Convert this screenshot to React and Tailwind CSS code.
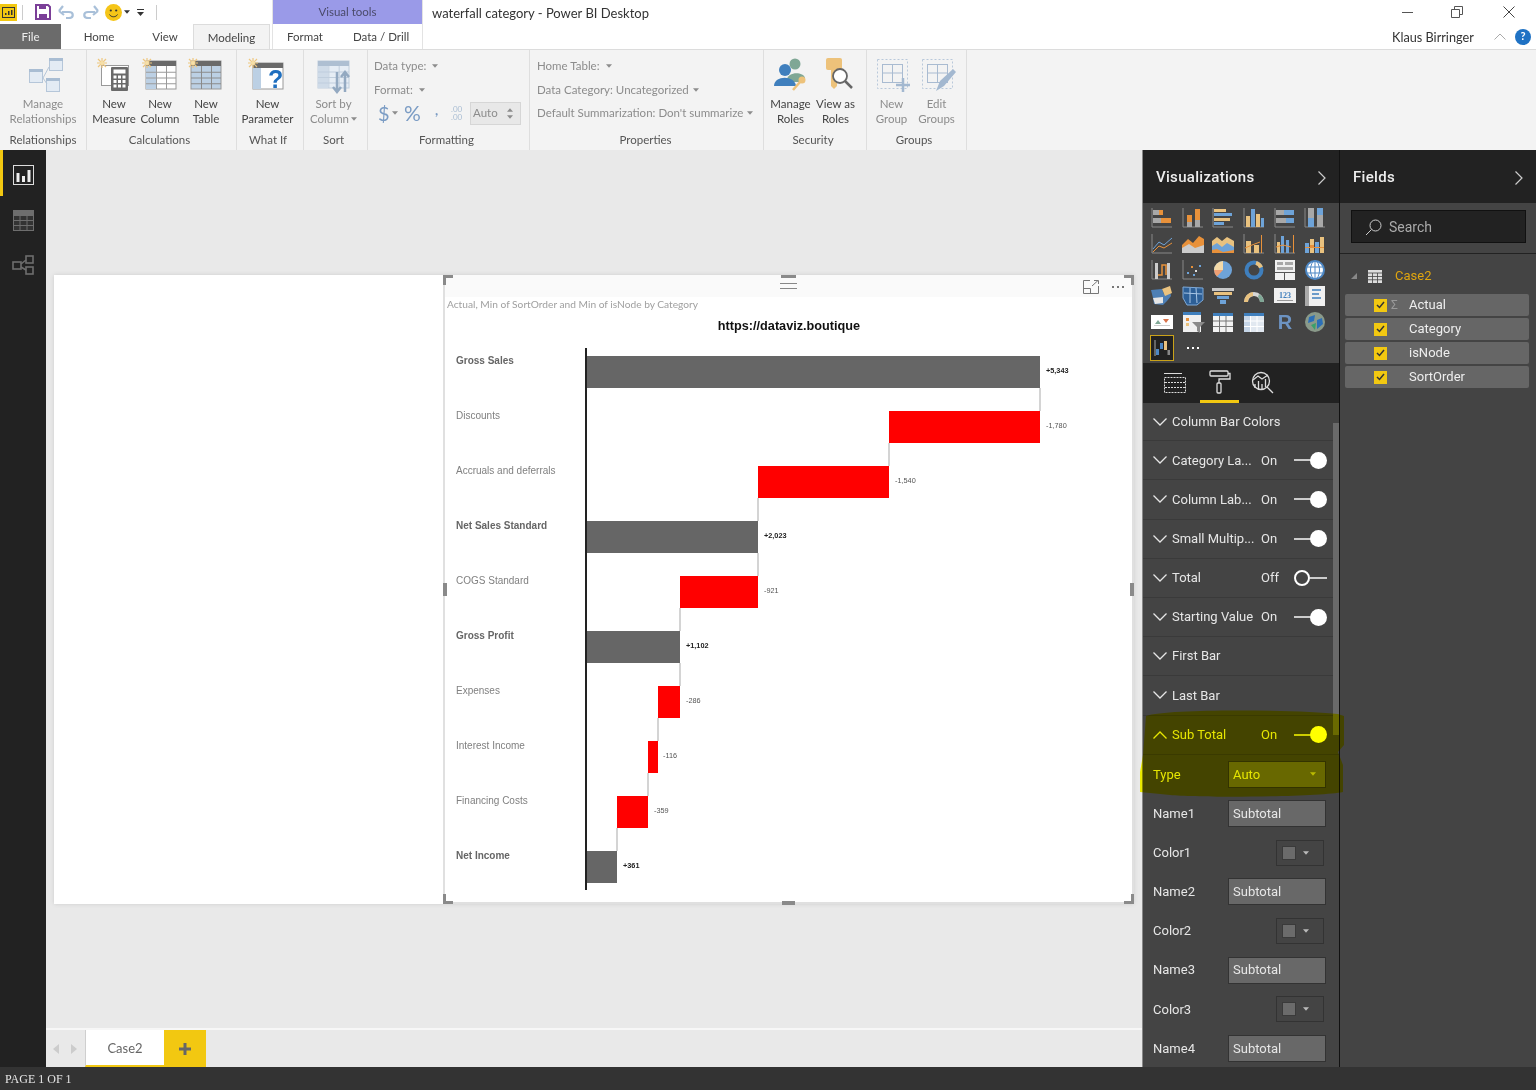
import React from "react";

const OR = "#e8913a";
const TAN = "#e9c27f";
const BL = "#6ea3d8";
const GR = "#a8a8a8";

// sparkle used on the "new ..." ribbon buttons
const Spark = ({ x, y }) => (
    <g stroke="#eec77f" strokeWidth="1.2">
        <path d={`M${x - 5} ${y}H${x + 5}M${x} ${y - 5}V${y + 5}M${x - 4} ${y - 4}L${x + 4} ${y + 4}M${x - 4} ${y + 4}L${x + 4} ${y - 4}`} />
        <circle cx={x} cy={y} r="2" fill="#f6dfa8" stroke="none" />
    </g>
);

const Ico = ({ children }) => (
    <svg width="40" height="40" viewBox="0 0 40 40" className="shrink-0">{children}</svg>
);

const tableLines = (x, y, w, h, cols, rows, color) => {
    const out = [];
    for (let i = 1; i < cols; i++) out.push(<rect key={`c${i}`} x={x + (w * i) / cols} y={y} width="1" height={h} fill={color} />);
    for (let i = 1; i < rows; i++) out.push(<rect key={`r${i}`} x={x} y={y + (h * i) / rows} width={w} height="1" fill={color} />);
    return out;
};

const ManageRelIcon = () => (
    <Ico>
        <g fill="#e3ebf4" stroke="#b5c6d9">
            <rect x="6.5" y="15.5" width="13" height="13" />
            <rect x="26.5" y="4.5" width="13" height="12" />
            <rect x="23.5" y="24.5" width="13" height="13" />
        </g>
        <rect x="6" y="15" width="14" height="3" fill="#a9bdd3" />
        <rect x="26" y="4" width="14" height="3" fill="#a9bdd3" />
        <rect x="23" y="24" width="14" height="3" fill="#a9bdd3" />
        <path d="M20 24L26 13M20 24L24 30" stroke="#b5c6d9" fill="none" />
    </Ico>
);

const MeasureIcon = () => (
    <Ico>
        <rect x="7.5" y="11.5" width="27" height="20" fill="#fff" stroke="#999" />
        <rect x="17" y="13" width="17" height="24" rx="1" fill="#6a6a6a" />
        <rect x="19.5" y="15.5" width="12" height="4" fill="#fff" />
        {[21.5, 26, 30.5].map((y) => [19.5, 24, 28.5].map((x) => <rect key={`${x}-${y}`} x={x} y={y} width="3" height="3" fill="#fff" />))}
        <Spark x={8} y={9} />
    </Ico>
);

const ColumnIcon = () => (
    <Ico>
        <rect x="6" y="7" width="30" height="28" fill="#fff" stroke="#999" />
        <rect x="6" y="7" width="30" height="5" fill="#6a6a6a" />
        <rect x="6" y="12" width="10" height="23" fill="#bcd0e4" />
        {tableLines(6, 12, 30, 23, 3, 4, "#9a9a9a")}
        <Spark x={7} y={9} />
    </Ico>
);

const TableIcon = () => (
    <Ico>
        <rect x="5" y="7" width="30" height="28" fill="#bcd0e4" stroke="#999" />
        <rect x="5" y="7" width="30" height="5" fill="#6a6a6a" />
        {tableLines(5, 12, 30, 23, 3, 4, "#8b8b8b")}
        <Spark x={7} y={9} />
    </Ico>
);

const ParamIcon = () => (
    <Ico>
        <rect x="5" y="9" width="30" height="26" fill="#fff" stroke="#999" />
        <rect x="5" y="9" width="30" height="5" fill="#6a6a6a" />
        <rect x="5" y="14" width="8" height="21" fill="#bcd0e4" />
        <Spark x={5} y={9} />
        <text x="20" y="34" fontSize="25" fontWeight="700" fill="#1f6fbf" fontFamily="Liberation Sans, sans-serif">?</text>
    </Ico>
);

const SortIcon = () => (
    <Ico>
        <rect x="4" y="7" width="31" height="27" fill="#e6edf5" stroke="#c0cedd" />
        <rect x="4" y="7" width="31" height="5" fill="#aebfd2" />
        <rect x="4" y="12" width="10" height="22" fill="#cfdbe8" />
        {tableLines(4, 12, 31, 22, 3, 4, "#c0cedd")}
        <path d="M23 18V37M19 33L23 38L27 33" stroke="#93a9c1" strokeWidth="2.5" fill="none" />
        <path d="M31 38V19M27 23L31 18L35 23" stroke="#93a9c1" strokeWidth="2.5" fill="none" />
    </Ico>
);

const RolesIcon = () => (
    <Ico>
        <circle cx="24" cy="10" r="5.5" fill="#7fa795" />
        <path d="M16 26C16 18 32 17 34 24V28H16Z" fill="#7fa795" />
        <circle cx="14" cy="16" r="6" fill="#3f7fbd" />
        <path d="M3 32C3 21 24 21 25 32Z" fill="#3f7fbd" />
        <circle cx="31" cy="26" r="3.5" fill="#edc27a" />
        <path d="M29 28L22 36" stroke="#edc27a" strokeWidth="2.5" />
    </Ico>
);

const ViewRolesIcon = () => (
    <Ico>
        <rect x="10" y="4" width="16" height="12" rx="2" fill="#edc27a" />
        <path d="M15 16H21V32L18 35L15 32Z" fill="#edc27a" />
        <circle cx="24" cy="22" r="7" fill="#fff" stroke="#666" strokeWidth="1.8" />
        <path d="M29 27L36 34" stroke="#666" strokeWidth="2.5" />
    </Ico>
);

const GroupIcon = ({ edit }) => (
    <Ico>
        <rect x="5.5" y="5.5" width="30" height="29" fill="none" stroke="#b9c8da" strokeDasharray="2 2" />
        <rect x="10.5" y="10.5" width="20" height="18" fill="none" stroke="#a9bbd1" />
        <path d="M20.5 10V28M10 19H30" stroke="#a9bbd1" />
        {edit ? (
            <path d="M19 37L23 27L36 15L39 18L27 32Z" fill="#a3b8d0" />
        ) : (
            <path d="M31 24V38M24 31H38" stroke="#a3b8d0" strokeWidth="2.5" />
        )}
    </Ico>
);

const Caret = ({ className = "" }) => (
    <svg width="6" height="4" viewBox="0 0 7 4" className={`shrink-0 ${className}`}><path d="M0 0H7L3.5 4Z" fill="currentColor" /></svg>
);

const BigBtn = ({ icon, lines, w, disabled, caret }) => (
    <div className={`flex flex-col items-center ${w} ${disabled ? "text-[#8c8c8c]" : "text-[#444]"}`}>
        {icon}
        <div className="mt-[2px] flex flex-col items-center leading-[15px] whitespace-nowrap">
            <span>{lines[0]}</span>
            <span className="flex items-center gap-[2px]">{lines[1]}{caret && <Caret />}</span>
        </div>
    </div>
);

const Group = ({ label, w, children, className = "", labelClass = "pr-[4px]" }) => (
    <div className={`flex h-[100px] shrink-0 flex-col border-r border-[#dedede] ${w}`}>
        <div className={`flex h-[81px] pt-[4px] ${className}`}>{children}</div>
        <div className={`flex h-[18px] items-center justify-center text-[#555] whitespace-nowrap ${labelClass}`}>{label}</div>
    </div>
);

const Ribbon = () => (
    <div className="flex h-[101px] shrink-0 border-t border-[#dcdcdc] bg-[#f3f3f3] text-[11.5px]">
        <Group label="Relationships" w="w-[87px]" className="justify-center" labelClass="">
            <BigBtn icon={<ManageRelIcon />} lines={["Manage", "Relationships"]} disabled w="w-[80px]" />
        </Group>
        <Group label="Calculations" w="w-[150px]" className="pl-[4px]">
            <BigBtn icon={<MeasureIcon />} lines={["New", "Measure"]} w="w-[46px]" />
            <BigBtn icon={<ColumnIcon />} lines={["New", "Column"]} w="w-[46px]" />
            <BigBtn icon={<TableIcon />} lines={["New", "Table"]} w="w-[46px]" />
        </Group>
        <Group label="What If" w="w-[67px]" className="justify-center pr-[5px]">
            <BigBtn icon={<ParamIcon />} lines={["New", "Parameter"]} w="w-[60px]" />
        </Group>
        <Group label="Sort" w="w-[64px]" className="justify-center pr-[4px]">
            <BigBtn icon={<SortIcon />} lines={["Sort by", "Column"]} disabled caret w="w-[56px]" />
        </Group>
        <Group label="Formatting" w="w-[162px]" className="flex-col pl-[6px] text-[#8c8c8c]">
            <div className="flex h-[24px] items-center gap-[6px]">Data type: <Caret /></div>
            <div className="flex h-[23px] items-center gap-[6px]">Format: <Caret /></div>
            <div className="flex items-center">
                <span className="w-[14px] pl-[4px] text-[20px] leading-[22px] text-[#7b9cc4]">$</span>
                <Caret className="ml-[4px]" />
                <span className="ml-[6px] w-[31px] text-[21px] leading-[22px] text-[#7b9cc4]">%</span>
                <span className="w-[16px] pb-[6px] text-[14px] font-bold leading-[18px] text-[#7b9cc4]">,</span>
                <span className="w-[19px] text-[8px] leading-[8px] text-[#a9bdd3]">.00<br />.00</span>
                <div className="flex h-[23px] w-[51px] items-center justify-between border border-[#d6d6d6] bg-[#e8e8e8] px-[2px]">
                    Auto
                    <span className="flex flex-col gap-[3px] pr-[5px]"><Caret className="rotate-180" /><Caret /></span>
                </div>
            </div>
        </Group>
        <Group label="Properties" w="w-[234px]" labelClass="pr-[2px]" className="flex-col pl-[7px] text-[#8c8c8c] whitespace-nowrap">
            <div className="flex h-[24px] items-center gap-[6px]">Home Table: <Caret /></div>
            <div className="flex h-[23px] items-center gap-[4px]">Data Category: Uncategorized <Caret /></div>
            <div className="flex h-[23px] items-center gap-[4px]">Default Summarization: Don't summarize <Caret /></div>
        </Group>
        <Group label="Security" w="w-[103px]" className="pl-[4px]">
            <BigBtn icon={<RolesIcon />} lines={["Manage", "Roles"]} w="w-[45px]" />
            <BigBtn icon={<ViewRolesIcon />} lines={["View as", "Roles"]} w="w-[45px]" />
        </Group>
        <Group label="Groups" w="w-[100px]" className="pl-[2px]" labelClass="pr-[5px]">
            <BigBtn icon={<GroupIcon />} lines={["New", "Group"]} disabled w="w-[45px]" />
            <BigBtn icon={<GroupIcon edit />} lines={["Edit", "Groups"]} disabled w="w-[45px]" />
        </Group>
    </div>
);

const Header = () => (
    <div className="flex h-[49px] shrink-0 bg-white text-[11.5px] text-[#444]">
        <div className="flex w-[272px] shrink-0 flex-col">
            <div className="flex h-[24px] items-center">
                <div className="flex h-[17px] w-[17px] items-center justify-center bg-[#f2c811]">
                    <svg width="13" height="11" viewBox="0 0 13 11"><rect x=".5" y=".5" width="12" height="10" fill="none" stroke="#333" /><path d="M3 8V6H4.5V8ZM6 8V4H7.5V8ZM9 8V3H10.5V8Z" fill="#333" /></svg>
                </div>
                <div className="ml-[5px] h-[15px] w-px bg-[#ccc]" />
                <svg className="ml-[12px]" width="16" height="16" viewBox="0 0 16 16"><path d="M1 1H13L15 3V15H1Z" fill="none" stroke="#7b3f98" strokeWidth="2" /><rect x="4" y="10" width="8" height="5" fill="#7b3f98" /><rect x="4" y="1" width="7" height="4" fill="#7b3f98" /></svg>
                <svg className="ml-[7px]" width="17" height="14" viewBox="0 0 17 14"><path d="M4 7H11C16 7 16 13 11 13H8M1 6L5 1M1 6L6 10" fill="none" stroke="#a9c0d9" strokeWidth="2.2" /></svg>
                <svg className="ml-[7px]" width="17" height="14" viewBox="0 0 17 14"><path d="M13 7H6C1 7 1 13 6 13H9M16 6L12 1M16 6L11 10" fill="none" stroke="#a9c0d9" strokeWidth="2.2" /></svg>
                <svg className="ml-[6px]" width="17" height="17" viewBox="0 0 17 17"><circle cx="8.5" cy="8.5" r="8.5" fill="#f5c518" /><circle cx="5.8" cy="6.5" r="1.1" fill="#333" /><circle cx="11.2" cy="6.5" r="1.1" fill="#333" /><path d="M4.5 10.5C6 13.5 11 13.5 12.5 10.5" stroke="#333" fill="none" /></svg>
                <Caret className="ml-[2px] text-[#333]" />
                <svg className="ml-[7px]" width="7" height="7" viewBox="0 0 7 7"><path d="M0 0H7V1H0ZM0 3H7L3.5 7Z" fill="#333" /></svg>
                <div className="ml-[12px] h-[15px] w-px bg-[#ccc]" />
            </div>
            <div className="flex h-[25px] items-stretch">
                <div className="flex w-[61px] items-center justify-center bg-[#6b6b6b] text-[#eee]">File</div>
                <div className="flex w-[76px] items-center justify-center">Home</div>
                <div className="flex w-[56px] items-center justify-center">View</div>
                <div className="-mb-px flex w-[77px] items-center justify-center border-x border-t border-[#dcdcdc] bg-[#f3f3f3]">Modeling</div>
            </div>
        </div>
        <div className="flex w-[151px] shrink-0 flex-col border-x border-[#e3e3e3]">
            <div className="flex h-[24px] items-center justify-center bg-[#9a9ae8] text-[#4a4a6a]">Visual tools</div>
            <div className="flex h-[25px] items-center pl-[14px]">
                <span className="w-[66px]">Format</span>
                <span>Data / Drill</span>
            </div>
        </div>
        <div className="min-w-0 flex-1 pl-[9px] pt-[3px] text-[13px] leading-[20px] text-[#333]">waterfall category - Power BI Desktop</div>
        <div className="flex w-[144px] shrink-0 flex-col">
            <div className="flex h-[24px] items-center">
                <div className="ml-[10px] h-px w-[11px] bg-[#555]" />
                <svg className="ml-[38px]" width="12" height="12" viewBox="0 0 12 12"><path d="M.5 3.5H8.5V11.5H.5ZM3.5 3V.5H11.5V8.5H9" fill="none" stroke="#555" /></svg>
                <svg className="ml-[40px]" width="12" height="12" viewBox="0 0 12 12"><path d="M.5 .5L11.5 11.5M11.5 .5L.5 11.5" stroke="#444" /></svg>
            </div>
            <div className="flex h-[25px] items-center">
                <span className="w-[81px] whitespace-nowrap pt-[2px] text-[12.7px] text-[#333]">Klaus Birringer</span>
                <svg className="ml-[21px]" width="12" height="7" viewBox="0 0 12 7"><path d="M.5 6.500L6 1L11.500 6.500" fill="none" stroke="#aaa" /></svg>
                <div className="ml-[9px] flex h-[16px] w-[16px] items-center justify-center rounded-full bg-[#1f72c4] text-[11px] font-bold text-white">?</div>
            </div>
        </div>
    </div>
);

const Rail = () => (
    <div className="flex w-[46px] shrink-0 flex-col bg-[#222]">
        <div className="flex h-[46px] items-center justify-center border-l-[3px] border-[#f2c811] pr-[3px] pt-[4px]">
            <svg width="21" height="20" viewBox="0 0 21 20"><rect x=".5" y=".5" width="20" height="19" fill="none" stroke="#ddd" /><path d="M3.5 17V8H6.5V17ZM9 17V11H12V17ZM14.5 17V5H17.5V17Z" fill="#eee" /></svg>
        </div>
        <div className="flex h-[48px] items-center justify-center">
            <svg width="21" height="21" viewBox="0 0 21 21"><rect width="21" height="21" fill="#6e6e6e" /><path d="M1 6H6.5V10H1ZM7.5 6H13.5V10H7.5ZM14.5 6H20V10H14.5ZM1 11H6.5V15H1ZM7.5 11H13.5V15H7.5ZM14.5 11H20V15H14.5ZM1 16H6.5V20H1ZM7.5 16H13.5V20H7.5ZM14.5 16H20V20H14.5Z" fill="#333" /></svg>
        </div>
        <div className="flex h-[42px] items-center justify-center">
            <svg width="22" height="20" viewBox="0 0 22 20" fill="none" stroke="#6e6e6e" strokeWidth="1.6"><rect x="1" y="7" width="8" height="7" /><rect x="14" y="1" width="7" height="7" /><rect x="14" y="12" width="7" height="7" /><path d="M9 9L14 5M9 12L14 15" /></svg>
        </div>
    </div>
);

const cats = [
    { name: "Gross Sales", bold: true, x1: 586, x2: 1040, y: 356, val: "+5,343", vx: 1046, link: 1040 },
    { name: "Discounts", x1: 889, x2: 1040, y: 411, val: "-1,780", vx: 1046, link: 889 },
    { name: "Accruals and deferrals", x1: 758, x2: 889, y: 466, val: "-1,540", vx: 895, link: 758 },
    { name: "Net Sales Standard", bold: true, x1: 586, x2: 758, y: 521, val: "+2,023", vx: 764, link: 758 },
    { name: "COGS Standard", x1: 680, x2: 758, y: 576, val: "-921", vx: 764, link: 680 },
    { name: "Gross Profit", bold: true, x1: 586, x2: 680, y: 631, val: "+1,102", vx: 686, link: 680 },
    { name: "Expenses", x1: 658, x2: 680, y: 686, val: "-286", vx: 686, link: 658 },
    { name: "Interest Income", x1: 648, x2: 658, y: 741, val: "-116", vx: 663, link: 648 },
    { name: "Financing Costs", x1: 617, x2: 648, y: 796, val: "-359", vx: 654, link: 617 },
    { name: "Net Income", bold: true, x1: 586, x2: 617, y: 851, val: "+361", vx: 623 },
];

const Waterfall = () => (
    <svg className="absolute inset-0" width="691" height="629" viewBox="443 275 691 629" fontFamily="Liberation Sans, sans-serif">
        <text x="789" y="330" textAnchor="middle" fontSize="12.700" fontWeight="700" fill="#111">https://dataviz.boutique</text>
        {cats.map((c) => (
            <g key={c.name}>
                <text x="456" y={c.y + 7.5} fontSize="10" fontWeight={c.bold ? 700 : 400} fill={c.bold ? "#666" : "#808080"}>{c.name}</text>
                <rect x={c.x1} y={c.y} width={c.x2 - c.x1} height="32" fill={c.bold ? "#666666" : "#ff0000"} />
                {c.link && <rect x={c.link - 0.5} y={c.y + 32} width="1" height="23" fill="#aaa" />}
                <text x={c.vx} y={c.y + 17} fontSize="7.300" fontWeight={c.bold ? 700 : 400} fill={c.bold ? "#222" : "#555"}>{c.val}</text>
            </g>
        ))}
        <rect x="585" y="348" width="2" height="542" fill="#222" />
    </svg>
);

const Corner = ({ className }) => (
    <svg className={`absolute ${className}`} width="10" height="10" viewBox="0 0 10 10"><path d="M0 0H10V3H3V10H0Z" fill="#8a8a8a" /></svg>
);

const Visual = () => (
    <div className="relative h-[629px] w-[691px] bg-white shadow-[inset_2px_0_0_#e0e0e0,inset_-2px_0_0_#e0e0e0,inset_0_-2px_0_#e0e0e0]">
        <div className="mx-[2px] h-[22px] bg-[#fafafa]" />
        <div className="pl-[4px] text-[10.2px] leading-[14px] text-[#a0a0a0]">Actual, Min of SortOrder and Min of isNode by Category</div>
        <Waterfall />
        <Corner className="left-0 top-0" />
        <Corner className="right-0 top-0 rotate-90" />
        <Corner className="bottom-0 left-0 -rotate-90" />
        <Corner className="bottom-0 right-0 rotate-180" />
        <div className="absolute left-[338px] top-0 h-[3px] w-[15px] bg-[#8a8a8a]" />
        <div className="absolute left-[337px] top-[8px] h-[6px] w-[17px] border-y border-[#888]" />
        <div className="absolute bottom-[-1px] left-[339px] h-[4px] w-[13px] bg-[#8a8a8a]" />
        <div className="absolute left-0 top-[308px] h-[13px] w-[4px] bg-[#8a8a8a]" />
        <div className="absolute right-0 top-[308px] h-[13px] w-[4px] bg-[#8a8a8a]" />
        <svg className="absolute left-[640px] top-[5px]" width="16" height="14" viewBox="0 0 16 14" fill="none" stroke="#777"><path d="M7 .5H.5V13.500H15.500V6M.5 8.500H7.500V13.500M9 6L15 .5M11 .5H15.500V4" /></svg>
        <div className="absolute left-[669px] top-[11px] flex gap-[3px]">
            <span className="h-[2px] w-[2px] bg-[#777]" /><span className="h-[2px] w-[2px] bg-[#777]" /><span className="h-[2px] w-[2px] bg-[#777]" />
        </div>
    </div>
);

const Canvas = () => (
    <div className="flex w-[1096px] shrink-0 flex-col bg-[#e9e9e9]">
        <div className="flex-1 pl-[8px] pt-[125px]">
            <div className="flex h-[629px] w-[1080px] justify-end bg-white shadow-[0_0_4px_#ccc]">
                <Visual />
            </div>
        </div>
        <div className="flex h-[39px] shrink-0 items-stretch border-t-2 border-[#f7f7f7] text-[13px]">
            <div className="flex w-[39px] items-center gap-[12px] pl-[7px]">
                <svg width="6" height="10" viewBox="0 0 6 10"><path d="M6 0V10L0 5Z" fill="#ccc" /></svg>
                <svg width="6" height="10" viewBox="0 0 6 10"><path d="M0 0V10L6 5Z" fill="#ccc" /></svg>
            </div>
            <div className="flex w-[79px] items-center justify-center border-b-2 border-l border-[#f2c811] border-l-[#cfcfcf] bg-white pt-[2px] text-[#666]">Case2</div>
            <div className="flex w-[42px] items-center justify-center bg-[#f2c811] text-[#666]">
                <svg width="12" height="12" viewBox="0 0 12 12"><path d="M4.5 0H7.5V4.5H12V7.5H7.5V12H4.5V7.5H0V4.5H4.5Z" fill="#666" /></svg>
            </div>
        </div>
    </div>
);

// each gallery cell is a small hand drawn chart
const bars = (list) => list.map(([x, y, w, h, f], i) => <rect key={i} x={x} y={y} width={w} height={h} fill={f} />);
const axis = <path d="M2 1V20H22" stroke="#888" fill="none" />;
const gallery = [
    <>{axis}{bars([[3, 3, 10, 5, OR], [3, 3, 6, 5, GR], [3, 11, 18, 5, OR], [3, 11, 8, 5, GR]])}</>,
    <>{axis}{bars([[6, 8, 5, 12, OR], [14, 2, 5, 11, OR], [14, 13, 5, 7, GR], [6, 15, 5, 5, GR]])}</>,
    <>{axis}{bars([[3, 2, 12, 3, TAN], [3, 6, 18, 3, BL], [3, 11, 16, 3, TAN], [3, 15, 10, 3, BL]])}</>,
    <>{axis}{bars([[4, 9, 4, 11, TAN], [9, 2, 4, 18, BL], [14, 7, 4, 13, TAN], [19, 11, 3, 9, BL]])}</>,
    <>{axis}{bars([[3, 3, 8, 5, GR], [11, 3, 10, 5, BL], [3, 11, 10, 5, GR], [13, 11, 8, 5, BL]])}</>,
    <>{axis}{bars([[5, 1, 6, 10, GR], [5, 11, 6, 9, BL], [14, 1, 6, 7, BL], [14, 8, 6, 12, GR]])}</>,
    <>{axis}<path d="M3 16L9 9L14 12L22 5" stroke={BL} fill="none" /><path d="M3 19L9 13L14 15L22 10" stroke={OR} fill="none" /></>,
    <><path d="M1 12L7 6L12 10L18 3L23 6V20H1Z" fill={OR} /><path d="M1 15L8 11L14 15L23 12V20H1Z" fill="#ccc" /></>,
    <><path d="M1 8L6 4L11 8L16 4L23 8V20H1Z" fill={TAN} /><path d="M1 13L6 10L11 14L16 10L23 14V20H1Z" fill={BL} /><path d="M1 17L6 16L12 19L23 17V20H1Z" fill={OR} /></>,
    <>{axis}{bars([[4, 8, 5, 12, TAN], [12, 12, 5, 8, TAN], [19, 2, 1, 18, OR]])}<path d="M3 15L10 12L18 9" stroke={OR} fill="none" /></>,
    <>{axis}{bars([[4, 9, 3, 11, TAN], [8, 3, 3, 17, BL], [13, 7, 3, 13, BL], [20, 2, 1, 18, OR]])}<path d="M3 14L10 12L18 14" stroke={OR} fill="none" /></>,
    <>{bars([[2, 10, 4, 10, BL], [7, 6, 4, 14, TAN], [12, 9, 4, 11, BL], [17, 4, 4, 16, TAN], [2, 14, 19, 1, OR], [7, 12, 4, 3, OR]])}</>,
    <>{axis}{bars([[5, 4, 3, 16, "#ccc"], [17, 4, 3, 16, "#ccc"]])}<path d="M8 16H12V6H16V16" stroke={OR} fill="none" strokeWidth="1.5" /></>,
    <>{axis}{bars([[6, 13, 2, 2, BL], [10, 7, 2, 2, OR], [14, 11, 2, 2, "#ddd"], [18, 6, 2, 2, BL], [12, 15, 2, 2, BL]])}</>,
    <><circle cx="12" cy="11" r="9" fill={BL} /><path d="M12 11V2A9 9 0 0 0 3 11Z" fill="#f3d9a8" /><path d="M12 11H3A9 9 0 0 0 6 17.5Z" fill="#ee9f73" /></>,
    <><circle cx="12" cy="11" r="7.5" fill="none" stroke="#3f7fbd" strokeWidth="4" /><path d="M14 3.8A7.5 7.5 0 0 1 19 8.5" fill="none" stroke={TAN} strokeWidth="4" /></>,
    <>{bars([[2, 1, 20, 20, "#f0f0f0"], [4, 3, 6, 3, GR], [12, 3, 8, 3, GR], [4, 8, 16, 3, GR], [2, 13, 20, 1, "#555"], [11, 13, 1, 8, "#555"]])}</>,
    <><circle cx="12" cy="11" r="9" fill="#fff" stroke="#4d87c4" strokeWidth="2" /><path d="M3 8H21M3 14H21M12 2V20" stroke="#4d87c4" /><ellipse cx="12" cy="11" rx="4.5" ry="9" fill="none" stroke="#4d87c4" /></>,
    <><path d="M1 5L12 4L14 9L20 6L21 11L17 16L13 20L4 19L3 13Z" fill="#4d7fb5" /><path d="M12 4L20 1L22 8L15 11Z" fill={TAN} /><path d="M3 13L13 12V18L5 19Z" fill="#e5e5e5" /></>,
    <><path d="M2 2L22 3V15L16 20H6L2 13Z" fill="#2d5f96" stroke="#7faad8" /><path d="M3 8L21 9M9 3V18M15 3L16 18" stroke="#a8c6e5" /></>,
    <>{bars([[1, 3, 22, 3, "#c9c9c9"], [3, 7, 18, 3, TAN], [6, 11, 12, 3, BL], [9, 15, 6, 4, BL]])}</>,
    <><path d="M2 17A10 10 0 0 1 22 17H18A6 6 0 0 0 6 17Z" fill="#d6d6d6" /><path d="M2 17A10 10 0 0 1 11 7V11A6 6 0 0 0 6 17Z" fill={TAN} /><path d="M17 9A10 10 0 0 1 22 17H18A6 6 0 0 0 16 12Z" fill="#7fa795" /></>,
    <><rect x="1" y="3" width="22" height="15" fill="#f0f0f0" /><text x="12" y="13" textAnchor="middle" fontSize="8" fontWeight="700" fill="#3f7fbd" fontFamily="Liberation Serif, serif">123</text><rect x="4" y="15" width="16" height="1" fill="#999" /></>,
    <><rect x="2" y="1" width="20" height="20" fill="#f0f0f0" /><rect x="2" y="1" width="4" height="20" fill="#aaa" /><path d="M9 5H18M9 9H16M9 13H18" stroke="#3f7fbd" strokeWidth="1.5" /></>,
    <><rect x="1" y="4" width="22" height="14" fill="#fff" /><path d="M5 13L8 9L11 13Z" fill="#7fa795" /><path d="M13 8H19L16 12Z" fill="#d9734a" /><rect x="4" y="14" width="16" height="1" fill="#ccc" /></>,
    <><rect x="2" y="1" width="18" height="20" fill="#f0f0f0" /><rect x="2" y="1" width="18" height="3" fill="#3f7fbd" /><rect x="5" y="7" width="3" height="3" fill={OR} /><rect x="5" y="12" width="3" height="3" fill={TAN} /><path d="M11 11H24L19 16V22L16 20V16Z" fill="#8a8a8a" /></>,
    <><rect x="2" y="2" width="20" height="19" fill="#f3f3f3" /><rect x="2" y="2" width="20" height="3" fill="#3f7fbd" /><path d="M8.5 5V21M15 5V21M2 10H22M2 15.500H22" stroke="#777" /></>,
    <><rect x="2" y="2" width="20" height="19" fill="#e1e8f0" /><rect x="2" y="2" width="20" height="3" fill="#3f7fbd" /><rect x="2" y="5" width="6" height="16" fill="#c6d6e8" /><path d="M8.500 5V21M15 5V21M2 10H22M2 15.500H22" stroke="#fff" /></>,
    <text x="12" y="17.500" textAnchor="middle" fontSize="20" fontWeight="700" fill="#6c93c2" fontFamily="Liberation Sans, sans-serif">R</text>,
    <><circle cx="12" cy="11" r="10" fill="#8a9a8a" /><path d="M6 6L12 4L11 10L5 12ZM14 9L19 7L20 13L14 18Z" fill="#2c6fb7" /><path d="M8 14L13 12L12 19Z" fill="#39a06a" /></>,
];

const Gallery = () => (
    <div className="h-[160px] shrink-0 bg-[#444] pl-[4px] pt-[2px]">
        <div className="grid grid-cols-[repeat(6,30.6px)] auto-rows-[26px]">
            {gallery.map((g, i) => (
                <div key={i} className="flex h-[26px] items-center justify-center">
                    <svg width="24" height="22" viewBox="0 0 24 22">{g}</svg>
                </div>
            ))}
            <div className="ml-[3px] flex h-[26px] w-[24px] items-center justify-center border border-[#c9a21a] bg-[#222]">
                <svg width="18" height="18" viewBox="0 0 18 18">
                    <path d="M2 17V1" stroke="#aaa" />
                    <path d="M3 10H6V16H3ZM7 4H10V10H7Z" fill="#4d87c4" />
                    <path d="M11 2H14V11H11Z" fill={TAN} />
                    <path d="M14.500 11H17V16H14.500Z" fill="#888" />
                </svg>
            </div>
            <div className="flex h-[26px] items-center justify-center gap-[3px]">
                <span className="h-[2px] w-[2px] bg-white" /><span className="h-[2px] w-[2px] bg-white" /><span className="h-[2px] w-[2px] bg-white" />
            </div>
        </div>
    </div>
);

const PaneTabs = () => (
    <div className="flex h-[40px] shrink-0 bg-[#222] pl-[21px]">
        <div className="flex w-[36px] items-center">
            <svg width="22" height="22" viewBox="0 0 22 22" fill="none" stroke="#ddd"><path d="M0 1.500H18" /><rect x=".5" y="5.500" width="21" height="15" strokeDasharray="2 1" /><path d="M1 10.500H21M1 15.500H21" strokeDasharray="2 1" /></svg>
        </div>
        <div className="flex w-[39px] items-center justify-center border-b-[3px] border-[#f2c811]">
            <svg width="22" height="24" viewBox="0 0 22 24" fill="none" stroke="#ddd" strokeWidth="1.300"><rect x="1" y="1" width="18" height="5" rx="1" /><path d="M19 3.500H21V9H10V13" /><rect x="8" y="13" width="4" height="10" rx="1" /></svg>
        </div>
        <div className="flex w-[47px] items-center justify-center">
            <svg width="24" height="24" viewBox="0 0 24 24" fill="none" stroke="#ddd" strokeWidth="1.300"><circle cx="10" cy="10" r="8.500" /><path d="M16 16L22 22M4 13V17M7.500 10V18M11 13V18M14.500 8V16M2 9L7 5L11 8L17 4" /></svg>
        </div>
    </div>
);

const Chevron = ({ up }) => (
    <svg width="14" height="8" viewBox="0 0 14 8" className="shrink-0" fill="none" stroke="currentColor" strokeWidth="1.300">
        <path d={up ? "M.5 7.500L7 1L13.500 7.500" : "M.5 .5L7 7L13.500 .5"} />
    </svg>
);

const Toggle = ({ on }) => on ? (
    <div className="flex w-[33px] items-center">
        <div className="h-[2px] flex-1 bg-[#ccc]" />
        <div className="-ml-px h-[17px] w-[17px] rounded-full bg-white" />
    </div>
) : (
    <div className="flex w-[33px] items-center">
        <div className="h-[16px] w-[16px] rounded-full border-2 border-white" />
        <div className="h-[2px] flex-1 bg-[#ccc]" />
    </div>
);

const SectionRow = ({ label, value, up, h = "h-[39.2px]" }) => (
    <div className={`flex shrink-0 items-center border-b border-[#3a3a3a] pl-[10px] pr-[12px] text-[#e6e6e6] ${h}`}>
        <Chevron up={up} />
        <span className="ml-[5px] flex-1 whitespace-nowrap">{label}</span>
        {value && <span className="w-[33px]">{value}</span>}
        {value && <Toggle on={value === "On"} />}
    </div>
);

const InputRow = ({ label, value, caret }) => (
    <div className="flex h-[39.2px] shrink-0 items-center pl-[10px] text-[#e6e6e6]">
        <span className="w-[75px]">{label}</span>
        <div className="flex h-[27px] w-[98px] items-center justify-between border border-[#333] bg-[#686868] px-[4px]">
            {value}
            {caret && <Caret className="mr-[5px] text-[#bbb]" />}
        </div>
    </div>
);

const ColorRow = ({ label }) => (
    <div className="flex h-[39.2px] shrink-0 items-center pl-[10px] text-[#e6e6e6]">
        <span className="w-[123px]">{label}</span>
        <div className="flex h-[26px] w-[48px] items-center gap-[7px] border border-[#333] pl-[5px]">
            <div className="h-[14px] w-[14px] border border-[#3a3a3a] bg-[#6b6b6b]" />
            <Caret className="text-[#bbb]" />
        </div>
    </div>
);

const FormatPane = () => (
    <div className="relative min-h-0 flex-1 overflow-hidden bg-[#444] text-[13px]">
        <SectionRow label="Column Bar Colors" h="h-[38.2px]" />
        <SectionRow label="Category La..." value="On" />
        <SectionRow label="Column Lab..." value="On" />
        <SectionRow label="Small Multip..." value="On" />
        <SectionRow label="Total" value="Off" />
        <SectionRow label="Starting Value" value="On" />
        <SectionRow label="First Bar" />
        <SectionRow label="Last Bar" />
        <SectionRow label="Sub Total" value="On" up />
        <InputRow label="Type" value="Auto" caret />
        <InputRow label="Name1" value="Subtotal" />
        <ColorRow label="Color1" />
        <InputRow label="Name2" value="Subtotal" />
        <ColorRow label="Color2" />
        <InputRow label="Name3" value="Subtotal" />
        <ColorRow label="Color3" />
        <InputRow label="Name4" value="Subtotal" />
        <div className="absolute right-0 top-[20px] h-[312px] w-[6px] bg-[#6a6a6a]" />
    </div>
);

const PaneHead = ({ title }) => (
    <div className="flex h-[53px] shrink-0 items-center justify-between bg-[#222] pl-[13px] pr-[13px] pt-[2px] text-[15px] font-medium tracking-[0.3px] text-[#eee]">
        {title}
        <svg width="8" height="14" viewBox="0 0 8 14"><path d="M.5 .5L7 7L.5 13.500" fill="none" stroke="#ccc" strokeWidth="1.200" /></svg>
    </div>
);

const VizPane = () => (
    <div className="flex w-[197px] shrink-0 flex-col border-r border-[#111]" style={{ fontFamily: "Roboto, sans-serif" }}>
        <PaneHead title="Visualizations" />
        <Gallery />
        <PaneTabs />
        <FormatPane />
    </div>
);

const fields = [
    { name: "Actual", sigma: true },
    { name: "Category" },
    { name: "isNode" },
    { name: "SortOrder" },
];

const FieldsPane = () => (
    <div className="flex min-w-0 flex-1 flex-col bg-[#444] text-[13px]" style={{ fontFamily: "Roboto, sans-serif" }}>
        <PaneHead title="Fields" />
        <div className="h-[51px] shrink-0 border-b border-[#222] px-[11px] pt-[7px]">
            <div className="flex h-[33px] w-[175px] items-center gap-[7px] border border-[#111] bg-[#222] pl-[13px] pt-[1px] text-[14px] text-[#aaa]">
                <svg width="17" height="17" viewBox="0 0 17 17" fill="none" stroke="#ccc"><circle cx="10.500" cy="6.500" r="5.500" /><path d="M6.500 10.500L1 16" /></svg>
                Search
            </div>
        </div>
        <div className="flex h-[40px] shrink-0 items-center pl-[11px] pt-[4px]">
            <svg width="6" height="6" viewBox="0 0 6 6"><path d="M6 0V6H0Z" fill="#888" /></svg>
            <svg className="ml-[11px]" width="14" height="13" viewBox="0 0 14 13"><rect width="14" height="13" fill="#ddd" /><path d="M4.500 3V13M9.500 3V13M0 3H14M0 6.500H14M0 9.750H14" stroke="#444" strokeWidth=".8" /></svg>
            <span className="ml-[13px] text-[#e0a50f]">Case2</span>
        </div>
        <div className="flex flex-col gap-[2px] pl-[5px]">
            {fields.map((f) => (
                <div key={f.name} className="flex h-[22px] w-[184px] items-center rounded-[2px] bg-[#666] pl-[29px] text-[#eee]">
                    <div className="flex h-[13px] w-[13px] items-center justify-center bg-[#f2c811]">
                        <svg width="9" height="8" viewBox="0 0 9 8"><path d="M1 4L3.500 6.500L8 1" fill="none" stroke="#333" strokeWidth="1.500" /></svg>
                    </div>
                    <span className="w-[16px] pl-[4px] text-[12px] text-[#999]">{f.sigma ? "Σ" : ""}</span>
                    <span className="ml-[6px]">{f.name}</span>
                </div>
            ))}
        </div>
    </div>
);

const App = () => {
    return (
        <div className="relative flex h-[1090px] w-[1536px] flex-col overflow-hidden bg-[#e9e9e9]" style={{ fontFamily: "Lato, 'Noto Sans', sans-serif" }}>
            <Header />
            <Ribbon />
            <div className="flex min-h-0 flex-1">
                <Rail />
                <Canvas />
                <div className="w-px bg-[#888]" />
                <VizPane />
                <FieldsPane />
            </div>
            <div className="flex h-[23px] shrink-0 items-center bg-[#333] pl-[5px] text-[12px] text-[#e6e6e6]" style={{ fontFamily: "'Liberation Serif', serif" }}>PAGE 1 OF 1</div>
            {/* marker highlight over the Sub Total rows */}
            <svg className="absolute left-[1138px] top-[705px] mix-blend-multiply" width="208" height="95" viewBox="1138 705 208 95">
                <path d="M1146 716C1170 708 1300 710 1338 714L1344 716V745L1338 752L1343 765V792C1320 797 1200 798 1170 795L1140 792V772L1143 755Z" fill="#ffff00" />
            </svg>
        </div>
    );
};

export default App;
